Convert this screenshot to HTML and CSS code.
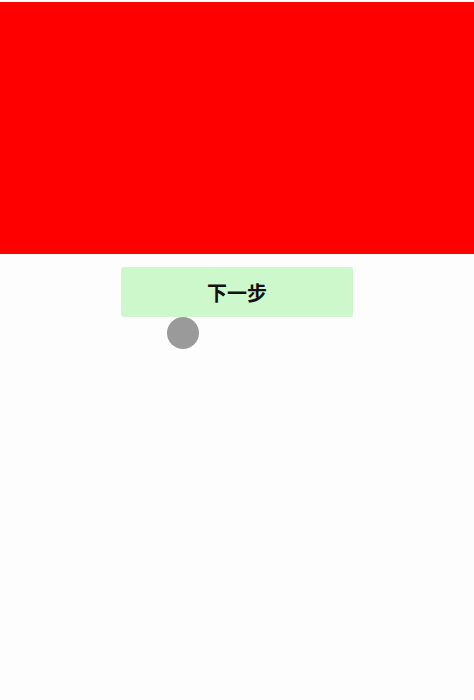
FILE: index.html
```html
<!DOCTYPE html>
<html lang="zh">
<head>
<meta charset="utf-8">
<link rel="stylesheet" href="styles.css">
</head>
<body>
<div class="page">
  <div class="banner"></div>
  <div class="actions">
    <button class="next">下一步</button>
  </div>
  <div class="touch"></div>
</div>
</body>
</html>
```
FILE: styles.css
```css
html, body {
  margin: 0;
  padding: 0;
  background: #fdfdfd;
}
.page {
  position: relative;
  width: 474px;
  height: 700px;
  padding-top: 2px;
  box-sizing: border-box;
  background: #fdfdfd;
  font-family: "Noto Sans CJK SC", "Noto Sans", sans-serif;
}
.banner {
  height: 252px;
  background: #fe0000;
}
.actions {
  display: flex;
  justify-content: center;
  padding-top: 13px;
}
.next {
  width: 232px;
  height: 50px;
  border: none;
  border-radius: 3px;
  background: #ccf8cc;
  color: #111;
  font-family: "Noto Sans CJK SC", sans-serif;
  font-size: 20px;
  font-weight: bold;
  padding: 0;
}
.touch {
  position: absolute;
  left: 167px;
  top: 317px;
  width: 32px;
  height: 32px;
  border-radius: 50%;
  background: #9a9a9a;
}
```
